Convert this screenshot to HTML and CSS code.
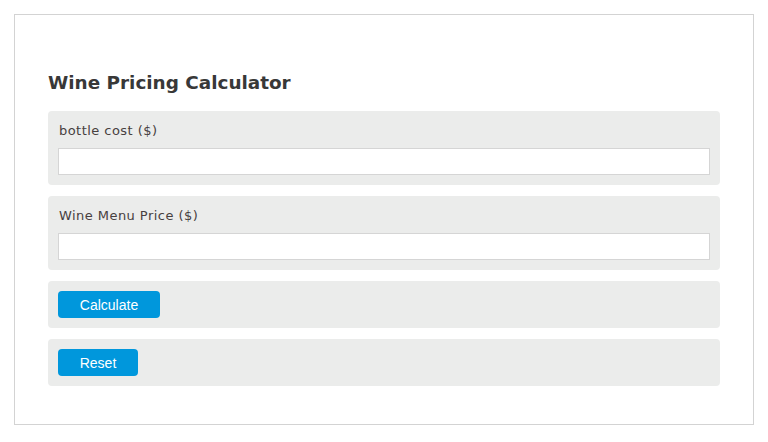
FILE: index.html
```html
<!DOCTYPE html>
<html>
<head>
<meta charset="utf-8">
<link rel="stylesheet" href="styles.css">
</head>
<body>
<div class="calc">
  <h2 class="title">Wine Pricing Calculator</h2>
  <div class="panel">
    <label class="label">bottle cost ($)</label>
    <input class="field" type="text">
  </div>
  <div class="panel">
    <label class="label">Wine Menu Price ($)</label>
    <input class="field" type="text">
  </div>
  <div class="panel">
    <button class="btn btn-calc">Calculate</button>
  </div>
  <div class="panel">
    <button class="btn btn-reset">Reset</button>
  </div>
</div>
</body>
</html>
```
FILE: styles.css
```css
html, body { margin: 0; padding: 0; background: #fff; }
body { padding: 14px; }
.calc {
  border: 1px solid #d3d3d3;
  padding: 0 33px 37px;
  height: 411px;
  box-sizing: border-box;
  font-family: "DejaVu Sans", sans-serif;
}
.title {
  margin: 0;
  padding-top: 56px;
  height: 96px;
  box-sizing: border-box;
  font-size: 18.4px;
  line-height: 24px;
  font-weight: bold;
  color: #383838;
}
.panel {
  background: #ebeceb;
  border-radius: 4px;
  padding: 10px;
  margin-bottom: 11px;
}
.label {
  display: block;
  font-size: 13px;
  line-height: 20px;
  letter-spacing: 0.45px;
  color: #474040;
  margin-bottom: 7px;
  padding-left: 1px;
}
.field {
  display: block;
  width: 100%;
  box-sizing: border-box;
  height: 27px;
  border: 1px solid #d5d5d5;
  background: #fff;
  margin: 0;
}
.btn {
  display: block;
  height: 27px;
  border: none;
  border-radius: 4px;
  background: #0097dc;
  color: #fff;
  font-family: "Liberation Sans", Arial, sans-serif;
  font-size: 14px;
  padding: 0;
}
.btn-calc { width: 102px; }
.btn-reset { width: 80px; }
```
